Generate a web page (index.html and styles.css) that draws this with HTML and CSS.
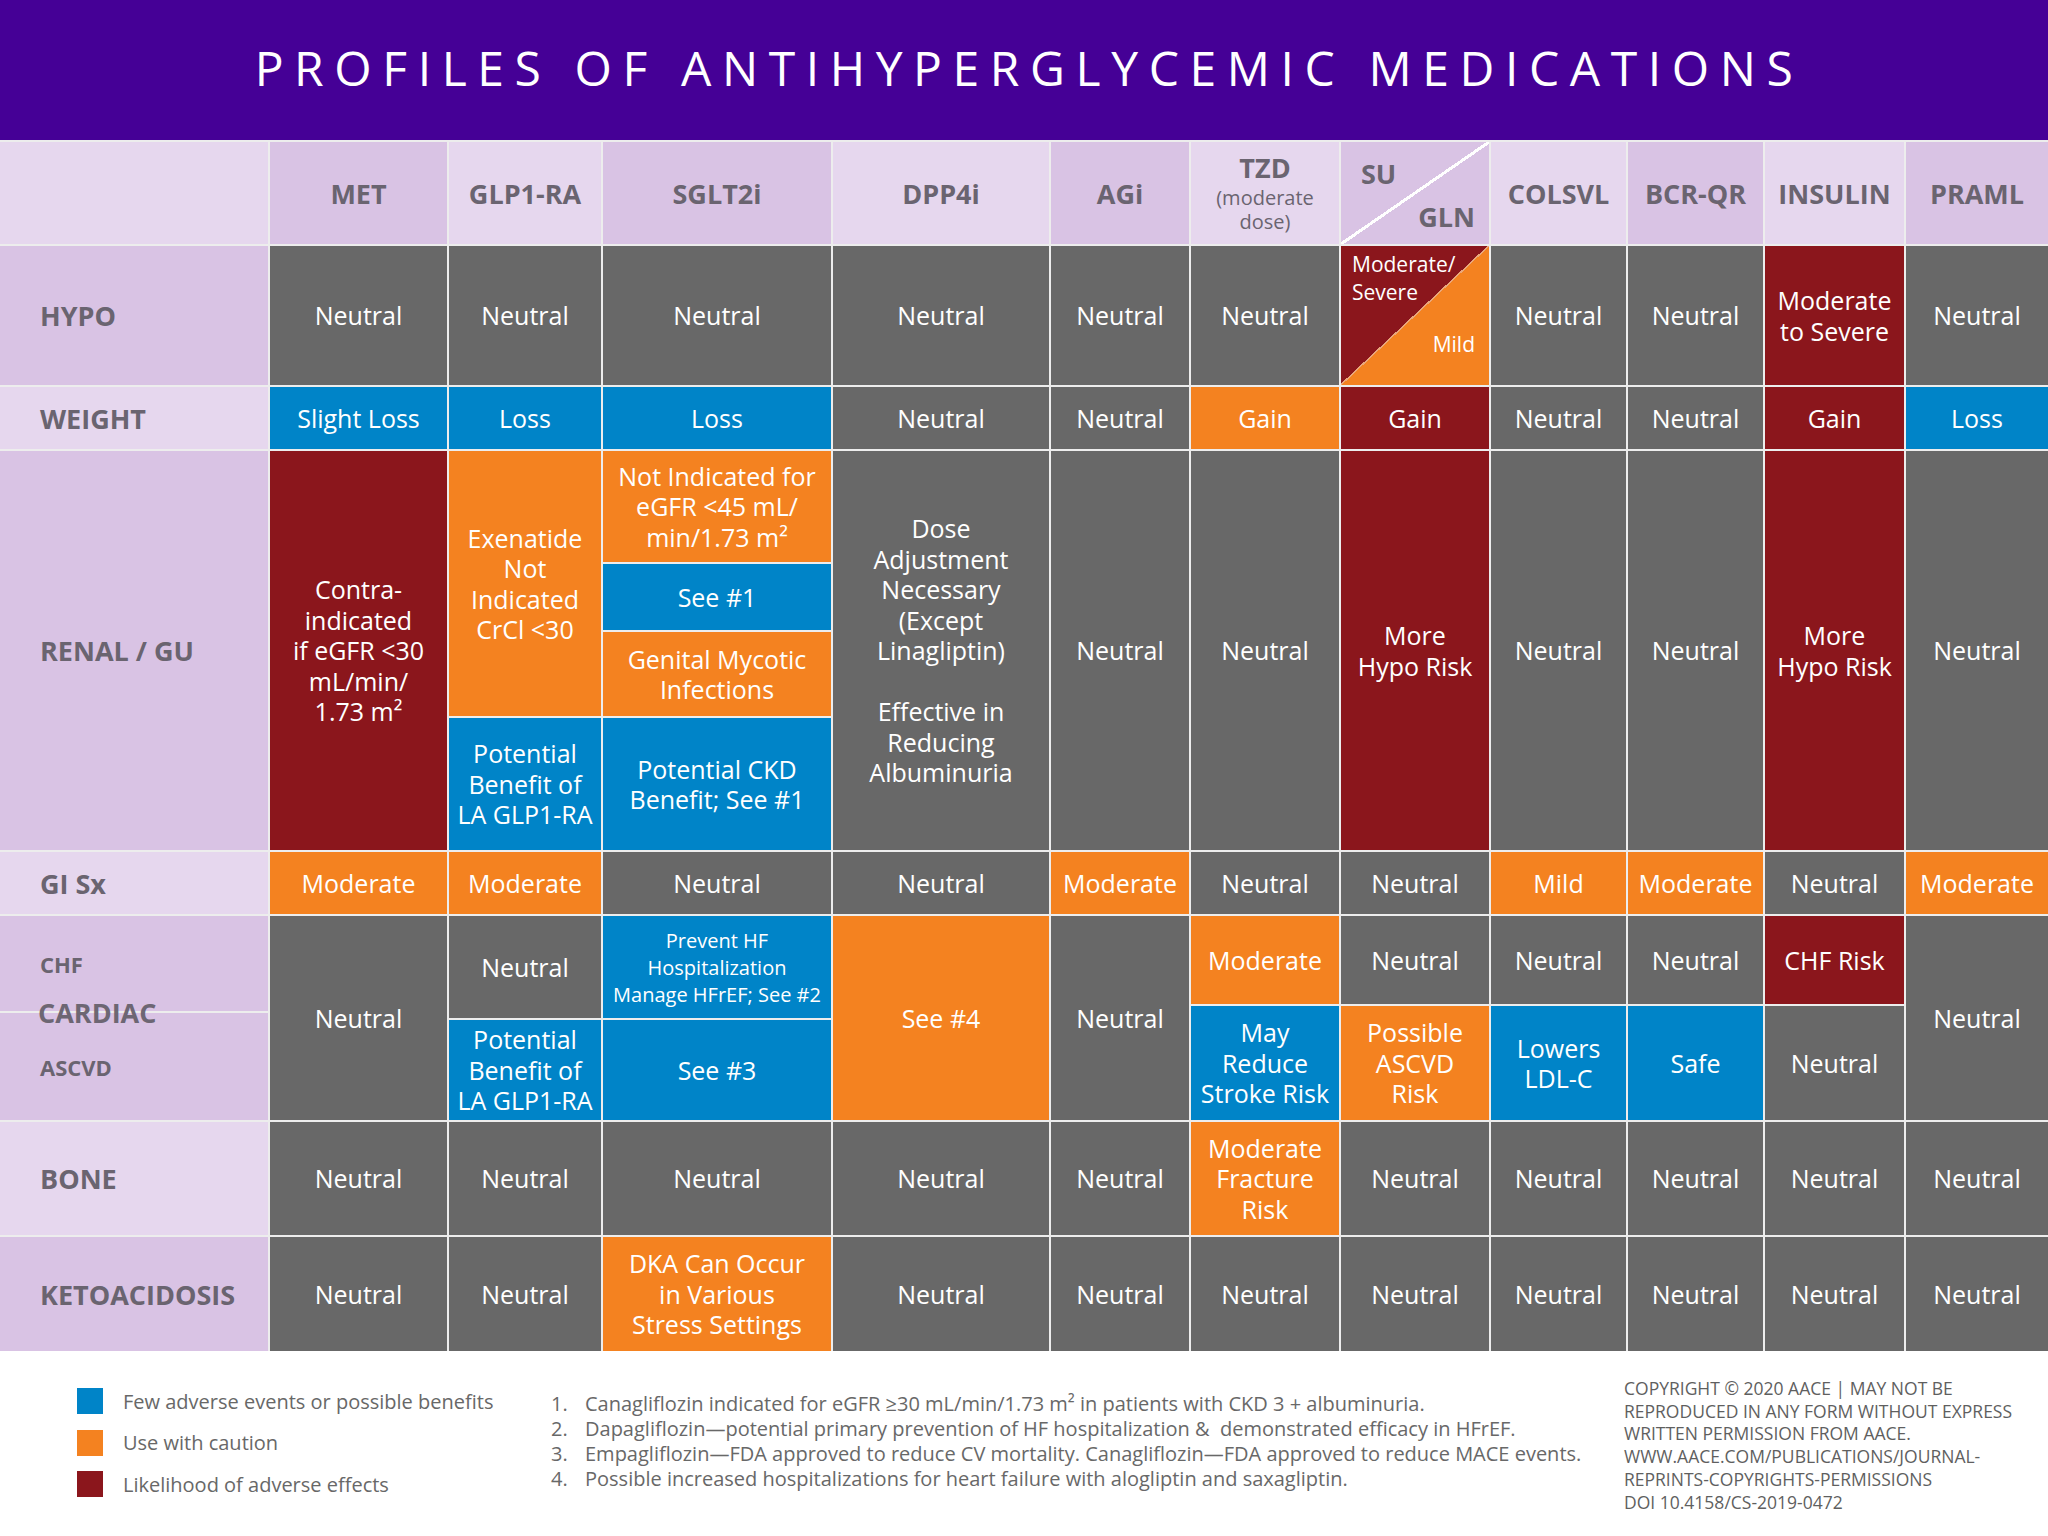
FILE: index.html
```html
<!DOCTYPE html>
<html lang="en">
<head>
<meta charset="utf-8">
<title>Profiles of Antihyperglycemic Medications</title>
<link rel="stylesheet" href="styles.css">
</head>
<body>
<header class="title">PROFILES OF ANTIHYPERGLYCEMIC MEDICATIONS</header>

<main class="grid">
  <!-- header row -->
  <div class="hd lt"></div>
  <div class="hd dk">MET</div>
  <div class="hd lt">GLP1-RA</div>
  <div class="hd dk">SGLT2i</div>
  <div class="hd lt">DPP4i</div>
  <div class="hd dk">AGi</div>
  <div class="hd lt tzd"><span class="tzd-name">TZD</span><span class="tzd-note">(moderate<br>dose)</span></div>
  <div class="hd dk sugln"><span class="su">SU</span><span class="gln">GLN</span></div>
  <div class="hd lt">COLSVL</div>
  <div class="hd dk">BCR-QR</div>
  <div class="hd lt">INSULIN</div>
  <div class="hd dk">PRAML</div>

  <!-- HYPO -->
  <div class="lbl dk">HYPO</div>
  <div class="c g">Neutral</div>
  <div class="c g">Neutral</div>
  <div class="c g">Neutral</div>
  <div class="c g">Neutral</div>
  <div class="c g">Neutral</div>
  <div class="c g">Neutral</div>
  <div class="c split"><span class="split-top">Moderate/<br>Severe</span><span class="split-bot">Mild</span></div>
  <div class="c g">Neutral</div>
  <div class="c g">Neutral</div>
  <div class="c r">Moderate<br>to Severe</div>
  <div class="c g">Neutral</div>

  <!-- WEIGHT -->
  <div class="lbl lt">WEIGHT</div>
  <div class="c b">Slight Loss</div>
  <div class="c b">Loss</div>
  <div class="c b">Loss</div>
  <div class="c g">Neutral</div>
  <div class="c g">Neutral</div>
  <div class="c o">Gain</div>
  <div class="c r">Gain</div>
  <div class="c g">Neutral</div>
  <div class="c g">Neutral</div>
  <div class="c r">Gain</div>
  <div class="c b">Loss</div>

  <!-- RENAL / GU -->
  <div class="lbl dk s4">RENAL / GU</div>
  <div class="c r s4">Contra-<br>indicated<br>if eGFR &lt;30<br>mL/min/<br>1.73 m²</div>
  <div class="c o s3">Exenatide<br>Not<br>Indicated<br>CrCl &lt;30</div>
  <div class="c o">Not Indicated for<br>eGFR &lt;45 mL/<br>min/1.73 m²</div>
  <div class="c g s4">Dose<br>Adjustment<br>Necessary<br>(Except<br>Linagliptin)<br><br>Effective in<br>Reducing<br>Albuminuria</div>
  <div class="c g s4">Neutral</div>
  <div class="c g s4">Neutral</div>
  <div class="c r s4">More<br>Hypo Risk</div>
  <div class="c g s4">Neutral</div>
  <div class="c g s4">Neutral</div>
  <div class="c r s4">More<br>Hypo Risk</div>
  <div class="c g s4">Neutral</div>
  <div class="c b">See #1</div>
  <div class="c o">Genital Mycotic<br>Infections</div>
  <div class="c b">Potential<br>Benefit of<br>LA GLP1-RA</div>
  <div class="c b">Potential CKD<br>Benefit; See #1</div>

  <!-- GI Sx -->
  <div class="lbl lt">GI Sx</div>
  <div class="c o">Moderate</div>
  <div class="c o">Moderate</div>
  <div class="c g">Neutral</div>
  <div class="c g">Neutral</div>
  <div class="c o">Moderate</div>
  <div class="c g">Neutral</div>
  <div class="c g">Neutral</div>
  <div class="c o">Mild</div>
  <div class="c o">Moderate</div>
  <div class="c g">Neutral</div>
  <div class="c o">Moderate</div>

  <!-- CARDIAC -->
  <div class="lbl-cardiac s3">
    <div class="half">CHF</div>
    <div class="half">ASCVD</div>
    <span class="cardiac-name">CARDIAC</span>
  </div>
  <div class="c g s3">Neutral</div>
  <div class="c g s2">Neutral</div>
  <div class="c b s2 sm">Prevent HF<br>Hospitalization<br>Manage HFrEF; See #2</div>
  <div class="c o s3">See #4</div>
  <div class="c g s3">Neutral</div>
  <div class="c o">Moderate</div>
  <div class="c g">Neutral</div>
  <div class="c g">Neutral</div>
  <div class="c g">Neutral</div>
  <div class="c r">CHF Risk</div>
  <div class="c g s3">Neutral</div>
  <div class="c b s2">May<br>Reduce<br>Stroke Risk</div>
  <div class="c o s2">Possible<br>ASCVD<br>Risk</div>
  <div class="c b s2">Lowers<br>LDL-C</div>
  <div class="c b s2">Safe</div>
  <div class="c g s2">Neutral</div>
  <div class="c b">Potential<br>Benefit of<br>LA GLP1-RA</div>
  <div class="c b">See #3</div>

  <!-- BONE -->
  <div class="lbl lt">BONE</div>
  <div class="c g">Neutral</div>
  <div class="c g">Neutral</div>
  <div class="c g">Neutral</div>
  <div class="c g">Neutral</div>
  <div class="c g">Neutral</div>
  <div class="c o">Moderate<br>Fracture<br>Risk</div>
  <div class="c g">Neutral</div>
  <div class="c g">Neutral</div>
  <div class="c g">Neutral</div>
  <div class="c g">Neutral</div>
  <div class="c g">Neutral</div>

  <!-- KETOACIDOSIS -->
  <div class="lbl dk">KETOACIDOSIS</div>
  <div class="c g">Neutral</div>
  <div class="c g">Neutral</div>
  <div class="c o">DKA Can Occur<br>in Various<br>Stress Settings</div>
  <div class="c g">Neutral</div>
  <div class="c g">Neutral</div>
  <div class="c g">Neutral</div>
  <div class="c g">Neutral</div>
  <div class="c g">Neutral</div>
  <div class="c g">Neutral</div>
  <div class="c g">Neutral</div>
  <div class="c g">Neutral</div>
</main>

<footer class="footer">
  <ul class="legend">
    <li><span class="sw sw-b"></span>Few adverse events or possible benefits</li>
    <li><span class="sw sw-o"></span>Use with caution</li>
    <li><span class="sw sw-r"></span>Likelihood of adverse effects</li>
  </ul>
  <ol class="notes">
    <li><span class="num">1.</span>Canagliflozin indicated for eGFR ≥30 mL/min/1.73 m² in patients with CKD 3 + albuminuria.</li>
    <li><span class="num">2.</span>Dapagliflozin—potential primary prevention of HF hospitalization &amp;&nbsp; demonstrated efficacy in HFrEF.</li>
    <li><span class="num">3.</span>Empagliflozin—FDA approved to reduce CV mortality. Canagliflozin—FDA approved to reduce MACE events.</li>
    <li><span class="num">4.</span>Possible increased hospitalizations for heart failure with alogliptin and saxagliptin.</li>
  </ol>
  <div class="copy">
    COPYRIGHT © 2020 AACE | MAY NOT BE<br>
    REPRODUCED IN ANY FORM WITHOUT EXPRESS<br>
    WRITTEN PERMISSION FROM AACE.<br>
    WWW.AACE.COM/PUBLICATIONS/JOURNAL-<br>
    REPRINTS-COPYRIGHTS-PERMISSIONS<br>
    DOI 10.4158/CS-2019-0472
  </div>
</footer>
</body>
</html>
```

FILE: styles.css
```css
* { box-sizing: border-box; }

html, body {
  margin: 0;
  padding: 0;
  background: #ffffff;
}

body {
  width: 2048px;
  height: 1536px;
  overflow: hidden;
  font-family: "Open Sans", "Liberation Sans", sans-serif;
}

.title {
  height: 140px;
  background: #450096;
  color: #ffffff;
  font-size: 48px;
  font-weight: 500;
  letter-spacing: 10.6px;
  display: flex;
  align-items: center;
  justify-content: center;
  padding-left: 10px;
  padding-bottom: 5px;
}

.grid {
  display: grid;
  grid-template-columns: 268px 177px 152px 228px 216px 138px 148px 148px 135px 135px 139px 142px;
  grid-template-rows: 102px 139px 62px 111px 66px 84px 132px 62px 88px 12px 100px 113px 114px;
  gap: 2px;
  padding-top: 2px;
  background: #ededed;
}

.s2 { grid-row: span 2; }
.s3 { grid-row: span 3; }
.s4 { grid-row: span 4; }

.dk { background: #d9c3e4; }
.lt { background: #e6d7ee; }

.hd {
  display: flex;
  align-items: center;
  justify-content: center;
  color: #6a6470;
  font-size: 27px;
  font-weight: 700;
}

.tzd {
  flex-direction: column;
}
.tzd-name {
  line-height: 30px;
  margin-bottom: 3px;
}
.tzd-note {
  font-size: 20px;
  font-weight: 400;
  line-height: 24px;
  text-align: center;
}

.sugln {
  flex-direction: column;
  align-items: stretch;
  justify-content: space-between;
  padding: 16px 14px 11px 20px;
  line-height: 32px;
  background: linear-gradient(to bottom right,
    #d9c3e4 calc(50% - 1.5px),
    #ffffff calc(50% - 1.5px),
    #ffffff calc(50% + 1.5px),
    #d9c3e4 calc(50% + 1.5px));
}
.su { align-self: flex-start; }
.gln { align-self: flex-end; }

.lbl {
  display: flex;
  align-items: center;
  padding-left: 40px;
  color: #6a6470;
  font-size: 27px;
  font-weight: 700;
}

.lbl-cardiac {
  position: relative;
  display: flex;
  flex-direction: column;
  gap: 2px;
  background: #ededed;
  color: #6a6470;
  font-weight: 700;
}
.half {
  flex: 1;
  background: #d9c3e4;
  display: flex;
  align-items: center;
  padding-left: 40px;
  font-size: 22px;
}
.half:first-child { flex: 0 0 95px; }
.cardiac-name {
  position: absolute;
  left: 38px;
  top: 81px;
  font-size: 27px;
  line-height: 32px;
  color: #6a6470;
  opacity: 0.97;
}

.c {
  display: flex;
  align-items: center;
  justify-content: center;
  text-align: center;
  color: #ffffff;
  font-size: 25px;
  line-height: 30.5px;
  white-space: nowrap;
}
.sm { font-size: 20px; line-height: 27px; }
.g { background: #686868; }
.b { background: #0084c8; }
.o { background: #f48220; }
.r { background: #8b161c; }

.split {
  position: relative;
  flex-direction: column;
  align-items: stretch;
  justify-content: space-between;
  padding: 4px 14px 27px 11px;
  font-size: 21px;
  line-height: 28px;
  text-align: left;
  background: linear-gradient(to bottom right,
    #8b161c calc(50% - 1px),
    #e9a77b calc(50% - 1px),
    #e9a77b calc(50% + 0.5px),
    #f48220 calc(50% + 0.5px));
}
.split-top { align-self: flex-start; }
.split-bot { align-self: flex-end; }

.footer {
  display: flex;
  height: 185px;
  color: #686868;
  font-size: 20px;
}

.legend {
  list-style: none;
  margin: 0;
  padding: 37px 0 0 77px;
  width: 551px;
  display: flex;
  flex-direction: column;
  gap: 15.5px;
}
.legend li {
  display: flex;
  align-items: center;
  height: 26px;
  white-space: nowrap;
}
.sw {
  width: 26px;
  height: 26px;
  margin-right: 20px;
  flex: none;
}
.sw-b { background: #0084c8; }
.sw-o { background: #f48220; }
.sw-r { background: #8b161c; }

.notes {
  list-style: none;
  margin: 0;
  padding: 40px 0 0 0;
  width: 1073px;
  line-height: 25px;
}
.notes li {
  display: flex;
  white-space: nowrap;
}
.num {
  width: 34px;
  flex: none;
}

.copy {
  padding-top: 26px;
  font-size: 17.5px;
  line-height: 22.7px;
  color: #5f5f5f;
  white-space: nowrap;
}
```
